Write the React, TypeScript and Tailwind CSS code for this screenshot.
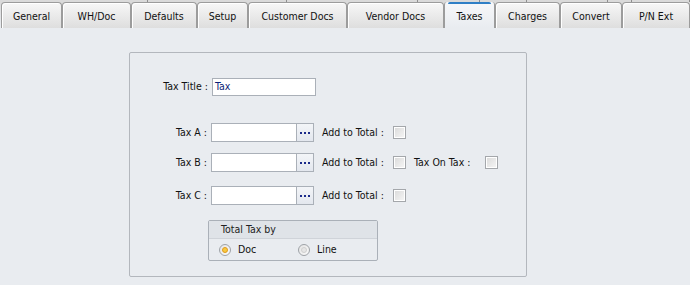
import React from "react";

const tabs = [
  { label: "General", w: "w-[61px]" },
  { label: "WH/Doc", w: "w-[69px]" },
  { label: "Defaults", w: "w-[66px]" },
  { label: "Setup", w: "w-[51px]" },
  { label: "Customer Docs", w: "w-[99px]" },
  { label: "Vendor Docs", w: "w-[97px]" },
  { label: "Taxes", w: "w-[51px]", active: true },
  { label: "Charges", w: "w-[65px]" },
  { label: "Convert", w: "w-[62px]" },
  { label: "P/N Ext", w: "w-[68px]" },
];

// widths of the back row of tabs, only their bottom edges show
const backRow = ["w-[148px]", "w-[139px]", "w-[131px]", "w-[62px]", "w-[47px]", "w-[81px]", "w-[24px]", "w-[58px]"];

const Checkbox = () => (
  <div className="w-[13px] h-[13px] border border-[#a4a7ab] bg-white p-[1px]">
    <div className="w-full h-full bg-gradient-to-br from-[#dcdcdc] to-[#f4f4f4]" />
  </div>
);

const Radio = ({ checked }: { checked?: boolean }) => (
  <div className="w-[12px] h-[12px] rounded-full border border-[#9ea2a7] bg-gradient-to-br from-[#e4e4e4] to-[#fafafa] flex items-center justify-center">
    {checked ? (
      <div className="w-[6px] h-[6px] rounded-full bg-[#f6c940] border border-[#e19a1c]" />
    ) : (
      <div className="w-[6px] h-[6px] rounded-full bg-[#e6e6e6] border border-[#d0d0d0]" />
    )}
  </div>
);

const Lookup = () => (
  <div className="flex h-[19px] w-[103px] border border-[#aab0b8] bg-white">
    <div className="flex-1" />
    <div className="w-[17px] border-l border-[#aab0b8] bg-gradient-to-b from-[#f3f5f8] to-[#e3e7ee] flex items-center justify-center gap-[2px]">
      <div className="w-[2px] h-[2px] bg-[#1a2a8a]" />
      <div className="w-[2px] h-[2px] bg-[#1a2a8a]" />
      <div className="w-[2px] h-[2px] bg-[#1a2a8a]" />
    </div>
  </div>
);

const TaxRow = ({ label, taxOnTax }: { label: string; taxOnTax?: boolean }) => (
  <div className="flex items-center h-[19px]">
    <div className="w-[78px] text-right pr-[1px]">{label}</div>
    <div className="ml-[3px]">
      <Lookup />
    </div>
    <div className="ml-[8px] w-[71px]">Add to Total :</div>
    <Checkbox />
    {taxOnTax && (
      <>
        <div className="ml-[8px] w-[71px]">Tax On Tax :</div>
        <Checkbox />
      </>
    )}
  </div>
);

export default function App() {
  return (
    <div className="w-[690px] h-[285px] bg-[#e9ecf0] font-['DejaVu_Sans_Condensed','Liberation_Sans',sans-serif] text-[10.5px] text-[#111] overflow-hidden">
      {/* tab strip */}
      <div className="h-[28px] bg-[#e9ecf0] flex flex-col">
        <div className="h-[2px] flex bg-[#dadada]">
          {backRow.map((w, i) => (
            <div key={i} className={`${w} border-r border-[#8e8e8e]`} />
          ))}
        </div>
        <div className="flex h-[26px] pl-[1px] bg-gradient-to-b from-[#dadada] to-[#e9ecf0]">
          {tabs.map((t) =>
            t.active ? (
              <div
                key={t.label}
                className={`${t.w} relative rounded-t-[3px] border-x border-[#9c9c9c] bg-gradient-to-b from-[#f7f8fa] to-[#e9ecf0] flex items-center justify-center pt-[3px]`}
              >
                <div className="absolute top-0 left-[3px] right-[3px] h-[2px] rounded-t-[2px] bg-[#2f7fc6]" />
                {t.label}
              </div>
            ) : (
              <div
                key={t.label}
                className={`${t.w} rounded-t-[4px] border border-b-0 border-[#9c9c9c] shadow-[inset_1px_1px_0_#ffffff] bg-gradient-to-b from-[#f7f7f7] to-[#dedede] flex items-center justify-center pt-[2px]`}
              >
                {t.label}
              </div>
            )
          )}
        </div>
      </div>

      {/* content */}
      <div className="pt-[24px] pl-[129px]">
        <div className="w-[398px] h-[225px] border border-[#b3b7bd] rounded-[2px] flex flex-col">
          <div className="flex items-center h-[18px] mt-[25px]">
            <div className="w-[78px] text-right">Tax Title :</div>
            <div className="ml-[4px] w-[104px] h-[18px] border border-[#aab0b8] bg-white pl-[2px] flex items-center text-[#0c1f78]">
              Tax
            </div>
          </div>
          <div className="mt-[27px]">
            <TaxRow label="Tax A :" />
          </div>
          <div className="mt-[11px]">
            <TaxRow label="Tax B :" taxOnTax />
          </div>
          <div className="mt-[14px]">
            <TaxRow label="Tax C :" />
          </div>
          <div className="mt-[15px] ml-[78px] w-[170px] h-[41px] border border-[#aab0b8] rounded-[2px] flex flex-col">
            <div className="h-[18px] bg-[#dfe3e8] border-b border-[#cfd3d9] pl-[12px] flex items-center text-[#222]">
              Total Tax by
            </div>
            <div className="flex-1 flex items-center pl-[10px]">
              <div className="w-[79px] flex items-center gap-[7px]">
                <Radio checked />
                <span>Doc</span>
              </div>
              <div className="flex items-center gap-[7px]">
                <Radio />
                <span>Line</span>
              </div>
            </div>
          </div>
        </div>
      </div>
    </div>
  );
}
